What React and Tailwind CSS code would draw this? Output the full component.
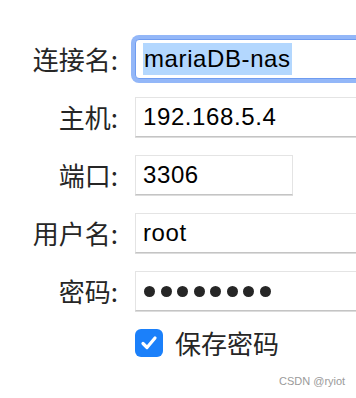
import React from 'react';

const labelFont = { fontFamily: '"Noto Sans CJK SC", "Noto Sans", sans-serif' };
const valueFont = { fontFamily: '"Liberation Sans", Arial, sans-serif' };

function Row({ label, children }) {
  return (
    <div className="flex items-center h-[40px] w-[600px]">
      <div className="w-[118px] shrink-0 text-right text-[26px] leading-none text-[#262626]" style={labelFont}>
        {label}:
      </div>
      <div className="ml-[17px] shrink-0">{children}</div>
    </div>
  );
}

function Field({ width = 260, focused, children }) {
  const base = 'h-[40px] bg-white flex items-center pl-[7px] text-[24px] text-black';
  if (focused) {
    return (
      <div
        className={`${base} rounded-[4px] border border-[#6f9cf0] shadow-[0_0_0_4px_#93b7f8]`}
        style={{ width, ...valueFont }}
      >
        {children}
      </div>
    );
  }
  return (
    <div
      className={`${base} border border-[#e4e4e4] border-b-[#c4c4c4] shadow-[0_1px_0_#dcdcdc]`}
      style={{ width, ...valueFont }}
    >
      {children}
    </div>
  );
}

export default function App() {
  return (
    <div className="relative w-[356px] h-[398px] overflow-hidden bg-white">
      <div className="flex flex-col gap-[18px] pt-[39px]">
        <Row label="连接名">
          <Field focused>
            <span className="bg-[#b3d7fe] px-[1px] leading-[32px] tracking-[0.6px]">mariaDB-nas</span>
          </Field>
        </Row>
        <Row label="主机">
          <Field><span className="tracking-[0.6px]">192.168.5.4</span></Field>
        </Row>
        <Row label="端口">
          <Field width={158}><span className="tracking-[0.6px]">3306</span></Field>
        </Row>
        <Row label="用户名">
          <Field><span className="tracking-[0.6px]">root</span></Field>
        </Row>
        <Row label="密码">
          <Field>
            <div className="flex gap-[5.5px] pl-[1px]">
              {Array.from({ length: 8 }).map((_, i) => (
                <span key={i} className="block w-[11px] h-[11px] rounded-full bg-[#262626]" />
              ))}
            </div>
          </Field>
        </Row>
        <div className="flex items-center pl-[135px] h-[28px]">
          <div className="w-[28px] h-[28px] rounded-[6px] bg-[#1b80fa] flex items-center justify-center">
            <svg width="20" height="20" viewBox="0 0 20 20" fill="none">
              <path d="M4 10.5l4 4 8-9.5" stroke="white" strokeWidth="3.2" strokeLinecap="round" strokeLinejoin="round" />
            </svg>
          </div>
          <span className="ml-[12px] text-[26px] leading-none text-[#262626]" style={labelFont}>保存密码</span>
        </div>
      </div>
      <div
        className="absolute left-[279px] top-[376px] text-[11px] text-[#9a9a9a] leading-none"
        style={valueFont}
      >
        CSDN @ryiot
      </div>
    </div>
  );
}
